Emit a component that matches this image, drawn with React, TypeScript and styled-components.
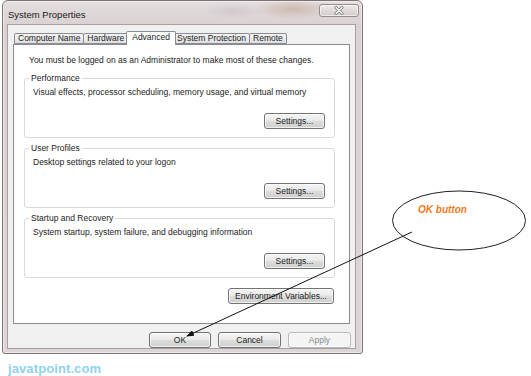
import React from 'react'
import styled, { createGlobalStyle } from 'styled-components'

const GlobalStyle = createGlobalStyle`
  html, body {
    margin: 0;
    padding: 0;
    background: #ffffff;
  }
  body {
    font-family: 'Liberation Sans', Arial, sans-serif;
  }
`

const Page = styled.div`
  position: relative;
  width: 531px;
  height: 376px;
  overflow: hidden;
  display: flex;
  flex-direction: column;
  align-items: flex-start;
`

const Window = styled.div`
  margin-left: 2px;
  width: 361px;
  height: 357px;
  box-sizing: border-box;
  border: 1px solid #7f7475;
  border-radius: 6px 6px 3px 3px;
  background:
    radial-gradient(ellipse 40px 10px at 290px 8px, rgba(190, 160, 140, 0.55), transparent),
    radial-gradient(ellipse 30px 8px at 230px 10px, rgba(200, 190, 195, 0.6), transparent),
    linear-gradient(to bottom, #e4dedf 0px, #d9d1d2 24px, #dcd4d5 100%);
  box-shadow: inset 0 0 0 1px rgba(255, 255, 255, 0.45);
  display: flex;
  flex-direction: column;
`

const TitleBar = styled.div`
  height: 23px;
  flex: none;
  display: flex;
  align-items: flex-start;
  justify-content: space-between;
  padding: 0 3px 0 5px;
`

const Title = styled.div`
  margin-top: 8px;
  font-size: 9.5px;
  line-height: 12px;
  color: #1a1a1a;
`

const CloseButton = styled.div`
  margin-top: 3px;
  width: 40px;
  height: 13px;
  box-sizing: border-box;
  border: 1px solid #958c8d;
  border-radius: 3px;
  background: linear-gradient(to bottom, #efebeb 0%, #e0dadb 50%, #d2cbcc 100%);
  box-shadow: inset 0 0 0 1px rgba(255, 255, 255, 0.6);
  display: flex;
  align-items: center;
  justify-content: center;
`

const Client = styled.div`
  flex: 1;
  margin: 0 6px 4px 4px;
  background: #f0f0f0;
  border: 1px solid #a79fa0;
  display: flex;
  flex-direction: column;
  padding: 6px 5px 0 5px;
`

const TabRow = styled.div`
  display: flex;
  align-items: flex-end;
  height: 13px;
  padding-left: 1px;
  position: relative;
  z-index: 1;
`

const Tab = styled.div<{ $active?: boolean }>`
  box-sizing: border-box;
  height: ${(p) => (p.$active ? '14px' : '11px')};
  margin: ${(p) => (p.$active ? '0 -2px -1px -2px' : '0 0 0 -1px')};
  padding: ${(p) => (p.$active ? '1px 5px 0' : '0 3px')};
  border: 1px solid #898c95;
  border-bottom: ${(p) => (p.$active ? 'none' : '1px solid #898c95')};
  border-radius: 2px 2px 0 0;
  background: ${(p) =>
    p.$active ? '#ffffff' : 'linear-gradient(to bottom, #f3f3f3 0%, #ebebeb 50%, #dedede 100%)'};
  position: relative;
  z-index: ${(p) => (p.$active ? 2 : 1)};
  font-size: 8.5px;
  line-height: 9px;
  color: #1c1c1c;
  white-space: nowrap;

  &:first-child {
    margin-left: 0;
  }
`

const Panel = styled.div`
  height: 280px;
  box-sizing: border-box;
  flex: none;
  background: #ffffff;
  border: 1px solid #898c95;
  padding: 10px 14px 0 10px;
  display: flex;
  flex-direction: column;
`

const Notice = styled.div`
  margin-left: 5px;
  font-size: 8.5px;
  line-height: 11px;
  color: #1c1c1c;
  white-space: nowrap;
`

const Group = styled.fieldset`
  margin: 7px 0 0 0;
  padding: 0 9px 8px 8px;
  border: 1px solid #d6dadd;
  border-radius: 3px;
  min-inline-size: 0;
  display: flex;
  flex-direction: column;
  align-items: flex-start;

  & + & {
    margin-top: 5px;
  }
`

const Legend = styled.legend`
  margin-left: -4px;
  padding: 0 2px;
  font-size: 8.5px;
  line-height: 11px;
  color: #1c1c1c;
`

const Description = styled.div`
  margin-top: 3px;
  font-size: 8.5px;
  line-height: 11px;
  color: #1c1c1c;
  white-space: nowrap;
`

const Button = styled.button<{ $width: number; $disabled?: boolean }>`
  width: ${(p) => p.$width}px;
  height: 16px;
  box-sizing: border-box;
  padding: 0;
  border: 1px solid ${(p) => (p.$disabled ? '#b5b9bc' : '#737373')};
  border-radius: 3px;
  background: ${(p) =>
    p.$disabled
      ? '#f4f4f4'
      : 'linear-gradient(to bottom, #f4f4f4 0%, #ebebeb 45%, #dddddd 50%, #cfcfcf 100%)'};
  box-shadow: inset 0 0 0 1px rgba(255, 255, 255, 0.7);
  font-family: 'Liberation Sans', Arial, sans-serif;
  font-size: 8.5px;
  line-height: 14px;
  color: ${(p) => (p.$disabled ? '#8a8a8a' : '#1c1c1c')};
  flex: none;
`

const GroupButton = styled(Button)`
  align-self: flex-end;
  margin-top: 15px;
`

const EnvButton = styled(Button)`
  align-self: flex-end;
  margin-top: 10px;
  margin-right: 1px;
`

const ButtonRow = styled.div`
  display: flex;
  justify-content: flex-end;
  gap: 7px;
  margin-top: 8px;
  margin-right: -1px;
`

const Watermark = styled.div`
  margin: 7px 0 0 8px;
  font-size: 13px;
  font-weight: bold;
  line-height: 15px;
  color: #8fd2ee;
  letter-spacing: 0.1px;
`

const Annotation = styled.svg`
  position: absolute;
  left: 0;
  top: 0;
  pointer-events: none;
`

const groups = [
  { title: 'Performance', text: 'Visual effects, processor scheduling, memory usage, and virtual memory' },
  { title: 'User Profiles', text: 'Desktop settings related to your logon' },
  { title: 'Startup and Recovery', text: 'System startup, system failure, and debugging information' },
]

const tabs = ['Computer Name', 'Hardware', 'Advanced', 'System Protection', 'Remote']

export default function App() {
  return (
    <>
      <GlobalStyle />
      <Page>
        <Window>
          <TitleBar>
            <Title>System Properties</Title>
            <CloseButton>
              <svg width="10" height="9" viewBox="0 0 10 9">
                <path d="M2 1.5 L8 7.5 M8 1.5 L2 7.5" stroke="#7d7878" strokeWidth="3" strokeLinecap="round" />
                <path d="M2 1.5 L8 7.5 M8 1.5 L2 7.5" stroke="#ffffff" strokeWidth="1.4" strokeLinecap="round" />
              </svg>
            </CloseButton>
          </TitleBar>
          <Client>
            <TabRow>
              {tabs.map((t) => (
                <Tab key={t} $active={t === 'Advanced'}>
                  {t}
                </Tab>
              ))}
            </TabRow>
            <Panel>
              <Notice>You must be logged on as an Administrator to make most of these changes.</Notice>
              {groups.map((g) => (
                <Group key={g.title}>
                  <Legend>{g.title}</Legend>
                  <Description>{g.text}</Description>
                  <GroupButton $width={61}>Settings...</GroupButton>
                </Group>
              ))}
              <EnvButton $width={106}>Environment Variables...</EnvButton>
            </Panel>
            <ButtonRow>
              <Button $width={62}>OK</Button>
              <Button $width={63}>Cancel</Button>
              <Button $width={63} $disabled>
                Apply
              </Button>
            </ButtonRow>
          </Client>
        </Window>
        <Watermark>javatpoint.com</Watermark>
        <Annotation width="531" height="376" viewBox="0 0 531 376">
          <defs>
            <marker id="arrow" markerWidth="8" markerHeight="6" refX="7" refY="3" orient="auto" markerUnits="userSpaceOnUse">
              <path d="M0 0 L8 3 L0 6 Z" fill="#111" />
            </marker>
          </defs>
          <ellipse cx="459" cy="220.5" rx="66.5" ry="29.5" fill="none" stroke="#222" strokeWidth="1" />
          <text
            x="418"
            y="213"
            fontFamily="'Liberation Sans', Arial, sans-serif"
            fontSize="10"
            fontWeight="bold"
            fontStyle="italic"
            fill="#f07a1c"
          >
            OK button
          </text>
          <line x1="412" y1="232" x2="187" y2="336" stroke="#111" strokeWidth="1" markerEnd="url(#arrow)" />
        </Annotation>
      </Page>
    </>
  )
}
